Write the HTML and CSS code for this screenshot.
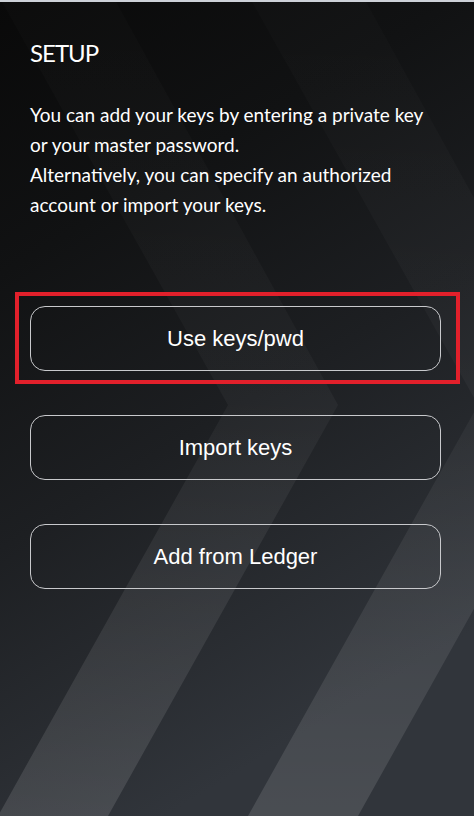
FILE: index.html
```html
<!DOCTYPE html>
<html lang="en">
<head>
<meta charset="utf-8">
<title>Setup</title>
<link rel="stylesheet" href="styles.css">
</head>
<body>
<main class="page">
  <h1 class="title">SETUP</h1>
  <p class="intro">You can add your keys by entering a private key<br>or your master password.<br>Alternatively, you can specify an authorized<br>account or import your keys.</p>
  <div class="actions">
    <div class="highlight"><button class="btn">Use keys/pwd</button></div>
    <button class="btn">Import keys</button>
    <button class="btn">Add from Ledger</button>
  </div>
</main>
</body>
</html>
```
FILE: styles.css
```css
html, body {
  margin: 0;
  padding: 0;
}

body {
  min-height: 816px;
  box-sizing: border-box;
  border-top: 2px solid #cdd1d8;
  color: #ffffff;
  font-family: Lato, "Noto Sans", sans-serif;
  background-color: #1a1b1e;
  background-image: url("data:image/svg+xml,<svg xmlns='http://www.w3.org/2000/svg' viewBox='0 0 474 816' preserveAspectRatio='none'><defs><linearGradient id='bg' x1='0' y1='0' x2='0.35' y2='1'><stop offset='0' stop-color='%23090909'/><stop offset='0.3' stop-color='%23111213'/><stop offset='0.6' stop-color='%231d1f22'/><stop offset='1' stop-color='%2331353b'/></linearGradient><linearGradient id='band' x1='0' y1='0' x2='0' y2='1'><stop offset='0' stop-color='%23ffffff' stop-opacity='0.012'/><stop offset='0.45' stop-color='%23ffffff' stop-opacity='0.03'/><stop offset='1' stop-color='%23ffffff' stop-opacity='0.12'/></linearGradient></defs><rect width='474' height='816' fill='url(%23bg)'/><polygon fill='url(%23band)' points='115,0 338,405 108,816 -2,816 228,405 1,0'/><polygon fill='url(%23band)' points='365,0 588,405 358,816 248,816 478,405 251,0'/></svg>");
  background-size: 100% 100%;
  background-repeat: no-repeat;
}

.page {
  padding: 36px 33px 0 30px;
}

.title {
  margin: 0;
  font-size: 24px;
  line-height: 30px;
  font-weight: 400;
  letter-spacing: -1px;
}

.intro {
  margin: 32px 0 0;
  font-size: 19px;
  line-height: 30px;
}

.actions {
  margin-top: 86px;
  display: flex;
  flex-direction: column;
  gap: 44px;
}

.highlight {
  margin: -14px -19px -13px -15px;
  padding: 10px 15px 9px 11px;
  border: 4px solid #e2202b;
}

.btn {
  display: block;
  width: 100%;
  height: 65px;
  box-sizing: border-box;
  border: 1px solid #c8c9cc;
  border-radius: 15px;
  background: transparent;
  color: #ffffff;
  font-family: "Liberation Sans", Arial, sans-serif;
  font-size: 22px;
  cursor: pointer;
}
```
